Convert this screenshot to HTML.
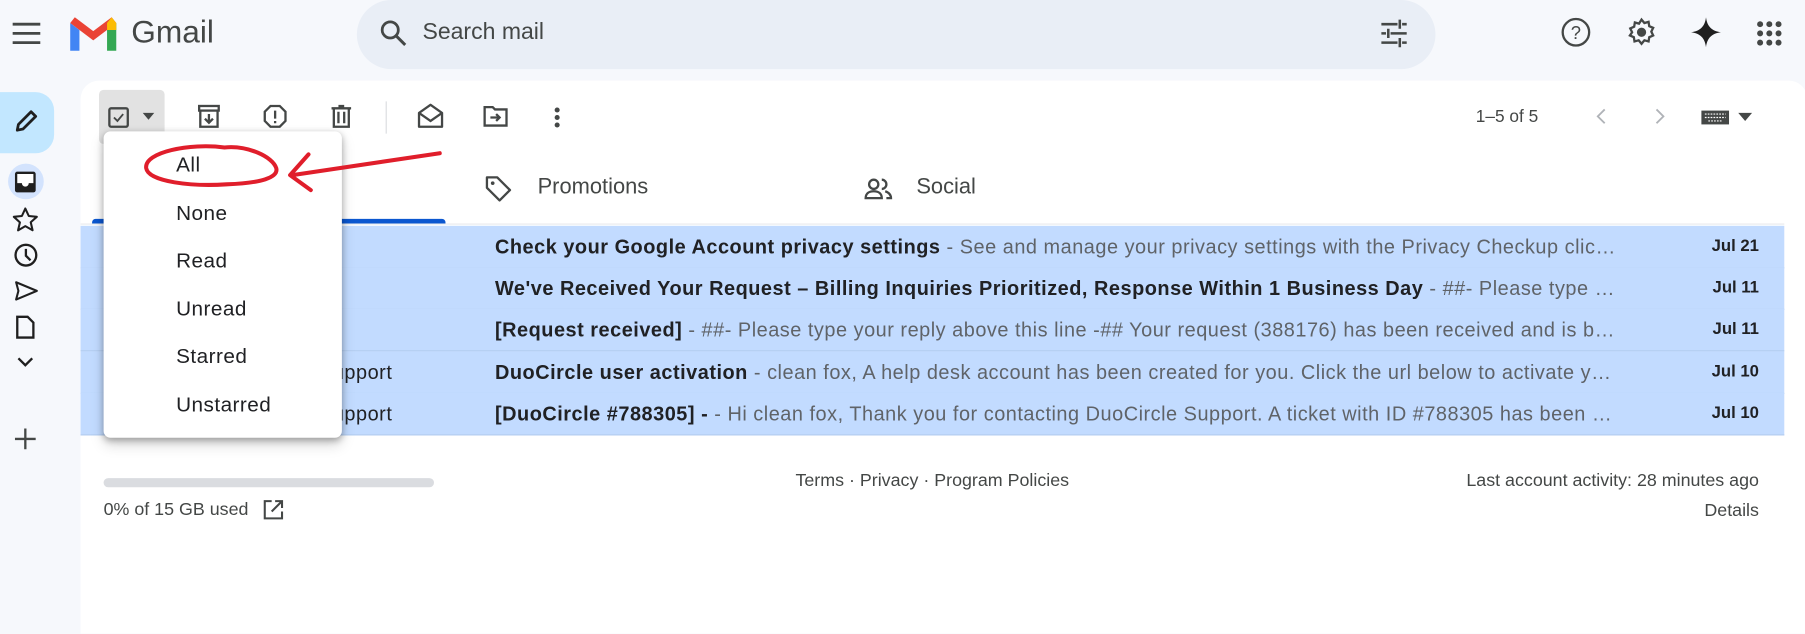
<!DOCTYPE html>
<html><head><meta charset="utf-8"><style>
html,body{margin:0;padding:0;width:1805px;height:629px;overflow:hidden;background:#f6f8fc;}
#w{position:absolute;left:0;top:0;width:1568px;height:546px;transform:scale(1.15115,1.152);transform-origin:0 0;font-family:"Liberation Sans",Arial,sans-serif;color:#202124;}
.a{position:absolute;}
svg{position:absolute;overflow:visible}
.row{position:absolute;left:70px;width:1480px;height:36px;background:#c2dbff;border-bottom:1px solid #b3cdf0;font-size:17.3px;letter-spacing:0.45px}
.row .s{position:absolute;left:360px;top:8px;white-space:nowrap;width:975px;overflow:hidden;text-overflow:ellipsis;color:#5f6368}
.row .s b{color:#202124}
.row .d{position:absolute;right:22px;top:10px;font-weight:bold;font-size:14.5px;letter-spacing:0}
.row .f{position:absolute;left:122px;top:8px;color:#202124}
.mi{position:absolute;left:63px;font-size:18px;letter-spacing:0.4px;color:#202124}
</style></head><body><div id="w">
<svg style="left:10px;top:19px" width="26" height="20"><path d="M1 2h24M1 10h24M1 18h24" stroke="#444746" stroke-width="2.4"/></svg>
<svg style="left:60px;top:14px" width="42" height="32" viewBox="0 0 42 32">
<path d="M1 6v24h8V12z" fill="#4285f4"/><path d="M33 12v18h8V6z" fill="#34a853"/>
<path d="M1 6l20 15 20-15-4-5-16 12L5 1z" fill="#ea4335"/><path d="M33 6l4-5 4 5v6h-8z" fill="#fbbc04"/>
</svg>
<div class="a" style="left:114px;top:12px;font-size:27.5px;color:#444746">Gmail</div>
<div class="a" style="left:310px;top:0;width:937px;height:60px;border-radius:30px;background:#e9eef6"></div>
<svg style="left:330px;top:17px" width="24" height="24"><circle cx="9" cy="9" r="7" fill="none" stroke="#444746" stroke-width="2.4"/><path d="M14 14l8 8" stroke="#444746" stroke-width="2.6"/></svg>
<div class="a" style="left:367px;top:17px;font-size:20px;color:#444746">Search mail</div>
<svg style="left:1199px;top:17px" width="24" height="24"><path d="M1 4h14M19 4h4M1 12h4M9 12h14M1 20h14M19 20h4M17 0v8M7 8v8M17 16v8" stroke="#444746" stroke-width="2.2"/></svg>
<svg style="left:1356px;top:15px" width="26" height="26"><circle cx="13" cy="13" r="11.5" fill="none" stroke="#444746" stroke-width="2"/><text x="13" y="19" font-size="16" text-anchor="middle" fill="#444746" font-family="Liberation Sans">?</text></svg>
<svg style="left:1413px;top:15px" width="26" height="26" viewBox="0 0 26 26"><path d="M13 2l2.5 3 3.6-1 .6 3.7 3.4 1.5-1.6 3.3 1.6 3.3-3.4 1.5-.6 3.7-3.6-1-2.5 3-2.5-3-3.6 1-.6-3.7-3.4-1.5L4.8 13 3.2 9.7l3.4-1.5.6-3.7 3.6 1z" fill="none" stroke="#444746" stroke-width="2"/><circle cx="13" cy="13" r="4" fill="#444746"/></svg>
<svg style="left:1469px;top:15px" width="26" height="26"><path d="M13 0C14 8 18 12 26 13 18 14 14 18 13 26 12 18 8 14 0 13 8 12 12 8 13 0z" fill="#1f1f1f"/></svg>
<svg style="left:1526px;top:18px" width="22" height="22"><g fill="#444746"><circle cx="3" cy="3" r="2.6"/><circle cx="11" cy="3" r="2.6"/><circle cx="19" cy="3" r="2.6"/><circle cx="3" cy="11" r="2.6"/><circle cx="11" cy="11" r="2.6"/><circle cx="19" cy="11" r="2.6"/><circle cx="3" cy="19" r="2.6"/><circle cx="11" cy="19" r="2.6"/><circle cx="19" cy="19" r="2.6"/></g></svg>
<div class="a" style="left:-16px;top:80px;width:63px;height:53px;border-radius:16px;background:#c2e7ff"></div>
<svg style="left:12px;top:94px" width="22" height="22"><path d="M3 19l1-5L15 3l4 4L8 18z" fill="none" stroke="#1f1f1f" stroke-width="2.4" stroke-linejoin="round"/></svg>
<div class="a" style="left:7px;top:142px;width:31px;height:31px;border-radius:16px;background:#d3e3fd"></div>
<svg style="left:13px;top:149px" width="18" height="18"><rect x="0" y="0" width="18" height="18" rx="2" fill="#1f1f1f"/><path d="M2 2h14v8h-4a3 3 0 0 1-6 0H2z" fill="#fff"/></svg>
<svg style="left:11px;top:180px" width="22" height="21"><path d="M11 1l3 6.5 7 .7-5.3 4.7 1.6 7L11 16.3 4.7 20l1.6-7L1 8.2l7-.7z" fill="none" stroke="#1f1f1f" stroke-width="1.8" stroke-linejoin="round"/></svg>
<svg style="left:12px;top:211px" width="21" height="21"><circle cx="10.5" cy="10.5" r="9" fill="none" stroke="#1f1f1f" stroke-width="2"/><path d="M10.5 5v6l4 4" fill="none" stroke="#1f1f1f" stroke-width="2"/></svg>
<svg style="left:13px;top:244px" width="20" height="17"><path d="M1 1l18 7.5L1 16l2-7.5z" fill="none" stroke="#1f1f1f" stroke-width="1.8" stroke-linejoin="round"/></svg>
<svg style="left:14px;top:274px" width="16" height="20"><path d="M1 1h9l5 5v13H1z" fill="none" stroke="#1f1f1f" stroke-width="2"/></svg>
<svg style="left:15px;top:309px" width="14" height="10"><path d="M1 2l6 6 6-6" fill="none" stroke="#1f1f1f" stroke-width="2"/></svg>
<svg style="left:12px;top:371px" width="20" height="20"><path d="M10 1v18M1 10h18" stroke="#444746" stroke-width="2"/></svg>
<div class="a" style="left:70px;top:70px;width:1500px;height:480px;background:#fff;border-radius:16px 16px 0 0"></div>
<div class="a" style="left:86px;top:78px;width:57px;height:47px;background:#e2e2e2;border-radius:4px"></div>
<svg style="left:94px;top:93px" width="18" height="18"><rect x="1" y="1" width="16" height="16" rx="1.5" fill="none" stroke="#444746" stroke-width="2"/><path d="M5 9l3 3 5-6" fill="none" stroke="#444746" stroke-width="1.6"/></svg>
<svg style="left:124px;top:98px" width="10" height="6"><path d="M0 0h10L5 6z" fill="#444746"/></svg>
<svg style="left:172px;top:91px" width="19" height="20"><rect x="1" y="1" width="17" height="4" fill="none" stroke="#444746" stroke-width="2"/><path d="M2 5v14h15V5M9.5 8v7M6 12l3.5 3.5L13 12" fill="none" stroke="#444746" stroke-width="2"/></svg>
<svg style="left:229px;top:91px" width="20" height="20"><path d="M6 1h8l5 5v8l-5 5H6l-5-5V6z" fill="none" stroke="#444746" stroke-width="2"/><path d="M10 5v7M10 14v2" stroke="#444746" stroke-width="2"/></svg>
<svg style="left:288px;top:91px" width="17" height="20"><path d="M0 3h17M6 1h5M2 3v16h13V3M6 6v10M11 6v10" fill="none" stroke="#444746" stroke-width="2"/></svg>
<div class="a" style="left:335px;top:88px;width:1px;height:28px;background:#dadce0"></div>
<svg style="left:363px;top:90px" width="22" height="21"><path d="M1 8l10-7 10 7v12H1z" fill="none" stroke="#444746" stroke-width="2" stroke-linejoin="round"/><path d="M1 8l10 7 10-7" fill="none" stroke="#444746" stroke-width="2"/></svg>
<svg style="left:420px;top:92px" width="21" height="18"><path d="M1 1h7l2 2h10v14H1z" fill="none" stroke="#444746" stroke-width="2"/><path d="M6 10h8M11 7l3 3-3 3" fill="none" stroke="#444746" stroke-width="2"/></svg>
<svg style="left:481px;top:93px" width="6" height="18"><circle cx="3" cy="2.5" r="2.2" fill="#444746"/><circle cx="3" cy="9" r="2.2" fill="#444746"/><circle cx="3" cy="15.5" r="2.2" fill="#444746"/></svg>
<div class="a" style="left:1282px;top:93px;font-size:15px;color:#444746">1–5 of 5</div>
<svg style="left:1386px;top:94px" width="9" height="14"><path d="M8 1L2 7l6 6" fill="none" stroke="#b0b3b8" stroke-width="1.6"/></svg>
<svg style="left:1438px;top:94px" width="9" height="14"><path d="M1 1l6 6-6 6" fill="none" stroke="#b0b3b8" stroke-width="1.6"/></svg>
<svg style="left:1478px;top:96px" width="24" height="12"><rect x="0" y="0" width="24" height="12" fill="#444746"/><path d="M3 3h18M3 6h18M6 9h12" stroke="#fff" stroke-width="1" stroke-dasharray="1.5 1"/></svg>
<svg style="left:1510px;top:98px" width="12" height="7"><path d="M0 0h12L6 7z" fill="#444746"/></svg>
<div class="a" style="left:80px;top:190px;width:307px;height:4px;background:#0b57d0;border-radius:3px 3px 0 0"></div>
<div class="a" style="left:70px;top:194px;width:1480px;height:1px;background:#e8eaed"></div>
<svg style="left:422px;top:153px" width="22" height="22"><path d="M1 1h9l11 11-9 9L1 10z" fill="none" stroke="#444746" stroke-width="2" stroke-linejoin="round"/><circle cx="6" cy="6" r="1.6" fill="#444746"/></svg>
<div class="a" style="left:467px;top:152px;font-size:19px;color:#444746">Promotions</div>
<svg style="left:751px;top:154px" width="24" height="20"><circle cx="8" cy="6" r="4" fill="none" stroke="#444746" stroke-width="2"/><path d="M1 18c0-4 3-6 7-6s7 2 7 6zM15 2a4 4 0 0 1 0 8M18 12c3 1 5 3 5 6h-4" fill="none" stroke="#444746" stroke-width="2"/></svg>
<div class="a" style="left:796px;top:152px;font-size:19px;color:#444746">Social</div>
<div class="row" style="top:196px"><div class="s"><b>Check your Google Account privacy settings</b> - See and manage your privacy settings with the Privacy Checkup click here to review everything</div><div class="d">Jul 21</div></div>
<div class="row" style="top:232px"><div class="s"><b>We've Received Your Request – Billing Inquiries Prioritized, Response Within 1 Business Day</b> - ##- Please type your reply above this line</div><div class="d">Jul 11</div></div>
<div class="row" style="top:268px"><div class="s"><b>[Request received]</b> - ##- Please type your reply above this line -## Your request (388176) has been received and is being reviewed</div><div class="d">Jul 11</div></div>
<div class="row" style="top:305px"><div class="f">DuoCircle Support</div><div class="s"><b>DuoCircle user activation</b> - clean fox, A help desk account has been created for you. Click the url below to activate your account</div><div class="d">Jul 10</div></div>
<div class="row" style="top:341px"><div class="f">DuoCircle Support</div><div class="s"><b>[DuoCircle #788305] -</b> - Hi clean fox, Thank you for contacting DuoCircle Support. A ticket with ID #788305 has been created</div><div class="d">Jul 10</div></div>
<div class="a" style="left:90px;top:415px;width:287px;height:8px;border-radius:4px;background:#dadce0"></div>
<div class="a" style="left:90px;top:434px;font-size:15.5px;color:#444746">0% of 15 GB used</div>
<svg style="left:229px;top:434px" width="17" height="17"><path d="M7 1H1v15h15v-6M10 1h6v6M16 1L7 10" fill="none" stroke="#444746" stroke-width="1.8"/></svg>
<div class="a" style="left:691px;top:409px;font-size:15.5px;color:#444746">Terms · Privacy · Program Policies</div>
<div class="a" style="right:40px;top:409px;font-size:15.5px;color:#444746">Last account activity: 28 minutes ago</div>
<div class="a" style="right:40px;top:435px;font-size:15.5px;color:#444746">Details</div>
<div class="a" style="left:90px;top:114px;width:207px;height:266px;background:#fff;border-radius:6px;box-shadow:0 2px 6px rgba(0,0,0,.3),0 6px 12px rgba(0,0,0,.15)">
<div class="mi" style="top:19px">All</div>
<div class="mi" style="top:61px">None</div>
<div class="mi" style="top:102px">Read</div>
<div class="mi" style="top:144px">Unread</div>
<div class="mi" style="top:185px">Starred</div>
<div class="mi" style="top:227px">Unstarred</div>
</div>
<svg style="left:0;top:0" width="1568" height="546"><path d="M195 128c-30-4-70 4-68 18 2 12 40 16 70 14 30-1 45-6 43-14-3-10-25-20-45-18" fill="none" stroke="#e01e2b" stroke-width="3.5" stroke-linecap="round"/><path d="M382 133L254 152M268 134L252 152 270 165" fill="none" stroke="#e01e2b" stroke-width="3.5" stroke-linecap="round" stroke-linejoin="round"/></svg>
</div></body></html>
